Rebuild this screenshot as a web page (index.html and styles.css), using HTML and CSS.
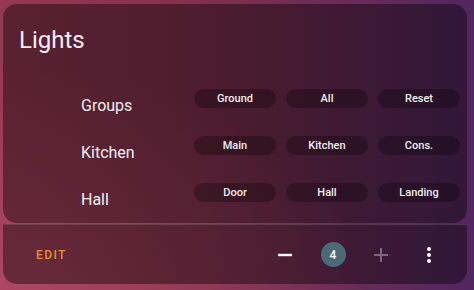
FILE: index.html
```html
<!DOCTYPE html>
<html lang="en">
<head>
    <meta charset="UTF-8">
    <title>Lights</title>
    <link rel="stylesheet" href="styles.css">
</head>
<body>
    <div class="panel">
        <div class="card">
            <h1 class="card-header">Lights</h1>

            <div class="row">
                <span class="row-label">Groups</span>
                <div class="chips">
                    <button class="chip">Ground</button>
                    <button class="chip">All</button>
                    <button class="chip">Reset</button>
                </div>
            </div>

            <div class="row">
                <span class="row-label">Kitchen</span>
                <div class="chips">
                    <button class="chip">Main</button>
                    <button class="chip">Kitchen</button>
                    <button class="chip">Cons.</button>
                </div>
            </div>

            <div class="row">
                <span class="row-label">Hall</span>
                <div class="chips">
                    <button class="chip">Door</button>
                    <button class="chip">Hall</button>
                    <button class="chip">Landing</button>
                </div>
            </div>
        </div>

        <div class="card-actions">
            <button class="edit-btn">EDIT</button>
            <div class="icon-buttons">
                <button class="icon-btn">
                    <svg viewBox="0 0 24 24" width="24" height="24"><path d="M19,13.2H5V10.8H19V13.2Z" fill="#ffffff"/></svg>
                </button>
                <button class="icon-btn">
                    <span class="badge">4</span>
                </button>
                <button class="icon-btn disabled">
                    <svg viewBox="0 0 24 24" width="24" height="24"><path d="M19,13H13V19H11V13H5V11H11V5H13V11H19V13Z" fill="#7c6878"/></svg>
                </button>
                <button class="icon-btn">
                    <svg viewBox="0 0 24 24" width="24" height="24"><path d="M12,16A2,2 0 0,1 14,18A2,2 0 0,1 12,20A2,2 0 0,1 10,18A2,2 0 0,1 12,16M12,10A2,2 0 0,1 14,12A2,2 0 0,1 12,14A2,2 0 0,1 10,12A2,2 0 0,1 12,10M12,4A2,2 0 0,1 14,6A2,2 0 0,1 12,8A2,2 0 0,1 10,6A2,2 0 0,1 12,4Z" fill="#ffffff"/></svg>
                </button>
            </div>
        </div>
    </div>
</body>
</html>
```

FILE: styles.css
```css
html, body {
    height: 100%;
}

body {
    font-family: Roboto, "Noto Sans", sans-serif;
    margin: 0;
    padding: 4px 7px 7px 3px;
    box-sizing: border-box;
    color: #f4eef0;
    background:
        radial-gradient(ellipse at 0% 100%, rgba(190, 80, 110, 0.6), rgba(190, 80, 110, 0) 55%),
        linear-gradient(to right, #963852 0%, #80304e 45%, #522660 100%);
}

.panel {
    width: 464px;
}

.card {
    background: rgba(0, 0, 0, 0.4);
    border-radius: 14px;
    padding: 20px 7px 7px 0;
    height: 219px;
    box-sizing: border-box;
}

.card-header {
    font-size: 24px;
    font-weight: 400;
    line-height: 32px;
    margin: 0 0 33px 16px;
}

.row {
    display: flex;
    align-items: flex-start;
    height: 33px;
    margin-bottom: 14px;
}

.row:last-child {
    margin-bottom: 0;
}

.row-label {
    flex: 1;
    align-self: center;
    padding-left: 78px;
    font-size: 16px;
    line-height: 20px;
}

.chips {
    display: grid;
    grid-template-columns: repeat(3, 82px);
    gap: 10px;
}

.chip {
    height: 19px;
    border: none;
    border-radius: 10px;
    background: rgba(0, 0, 0, 0.28);
    color: #f2eef0;
    font-family: inherit;
    font-size: 11px;
    font-weight: 500;
    padding: 0;
    cursor: pointer;
}

.card-actions {
    margin-top: 1px;
    height: 59px;
    border-top: 1px solid rgba(255, 255, 255, 0.12);
    border-radius: 0 0 14px 14px;
    background: rgba(0, 0, 0, 0.4);
    display: flex;
    align-items: center;
    justify-content: space-between;
    padding: 0 14px 0 25px;
}

.edit-btn {
    background: none;
    border: none;
    color: #e8902c;
    font-family: inherit;
    font-size: 12px;
    font-weight: 500;
    letter-spacing: 1.4px;
    padding: 8px;
    cursor: pointer;
}

.icon-buttons {
    display: flex;
}

.icon-btn {
    width: 48px;
    height: 48px;
    background: none;
    border: none;
    padding: 0;
    display: flex;
    align-items: center;
    justify-content: center;
    cursor: pointer;
}

.badge {
    width: 25px;
    height: 25px;
    border-radius: 50%;
    background: #4a6a78;
    color: #ffffff;
    font-family: Roboto, sans-serif;
    font-size: 12px;
    font-weight: 500;
    display: flex;
    align-items: center;
    justify-content: center;
}
```
